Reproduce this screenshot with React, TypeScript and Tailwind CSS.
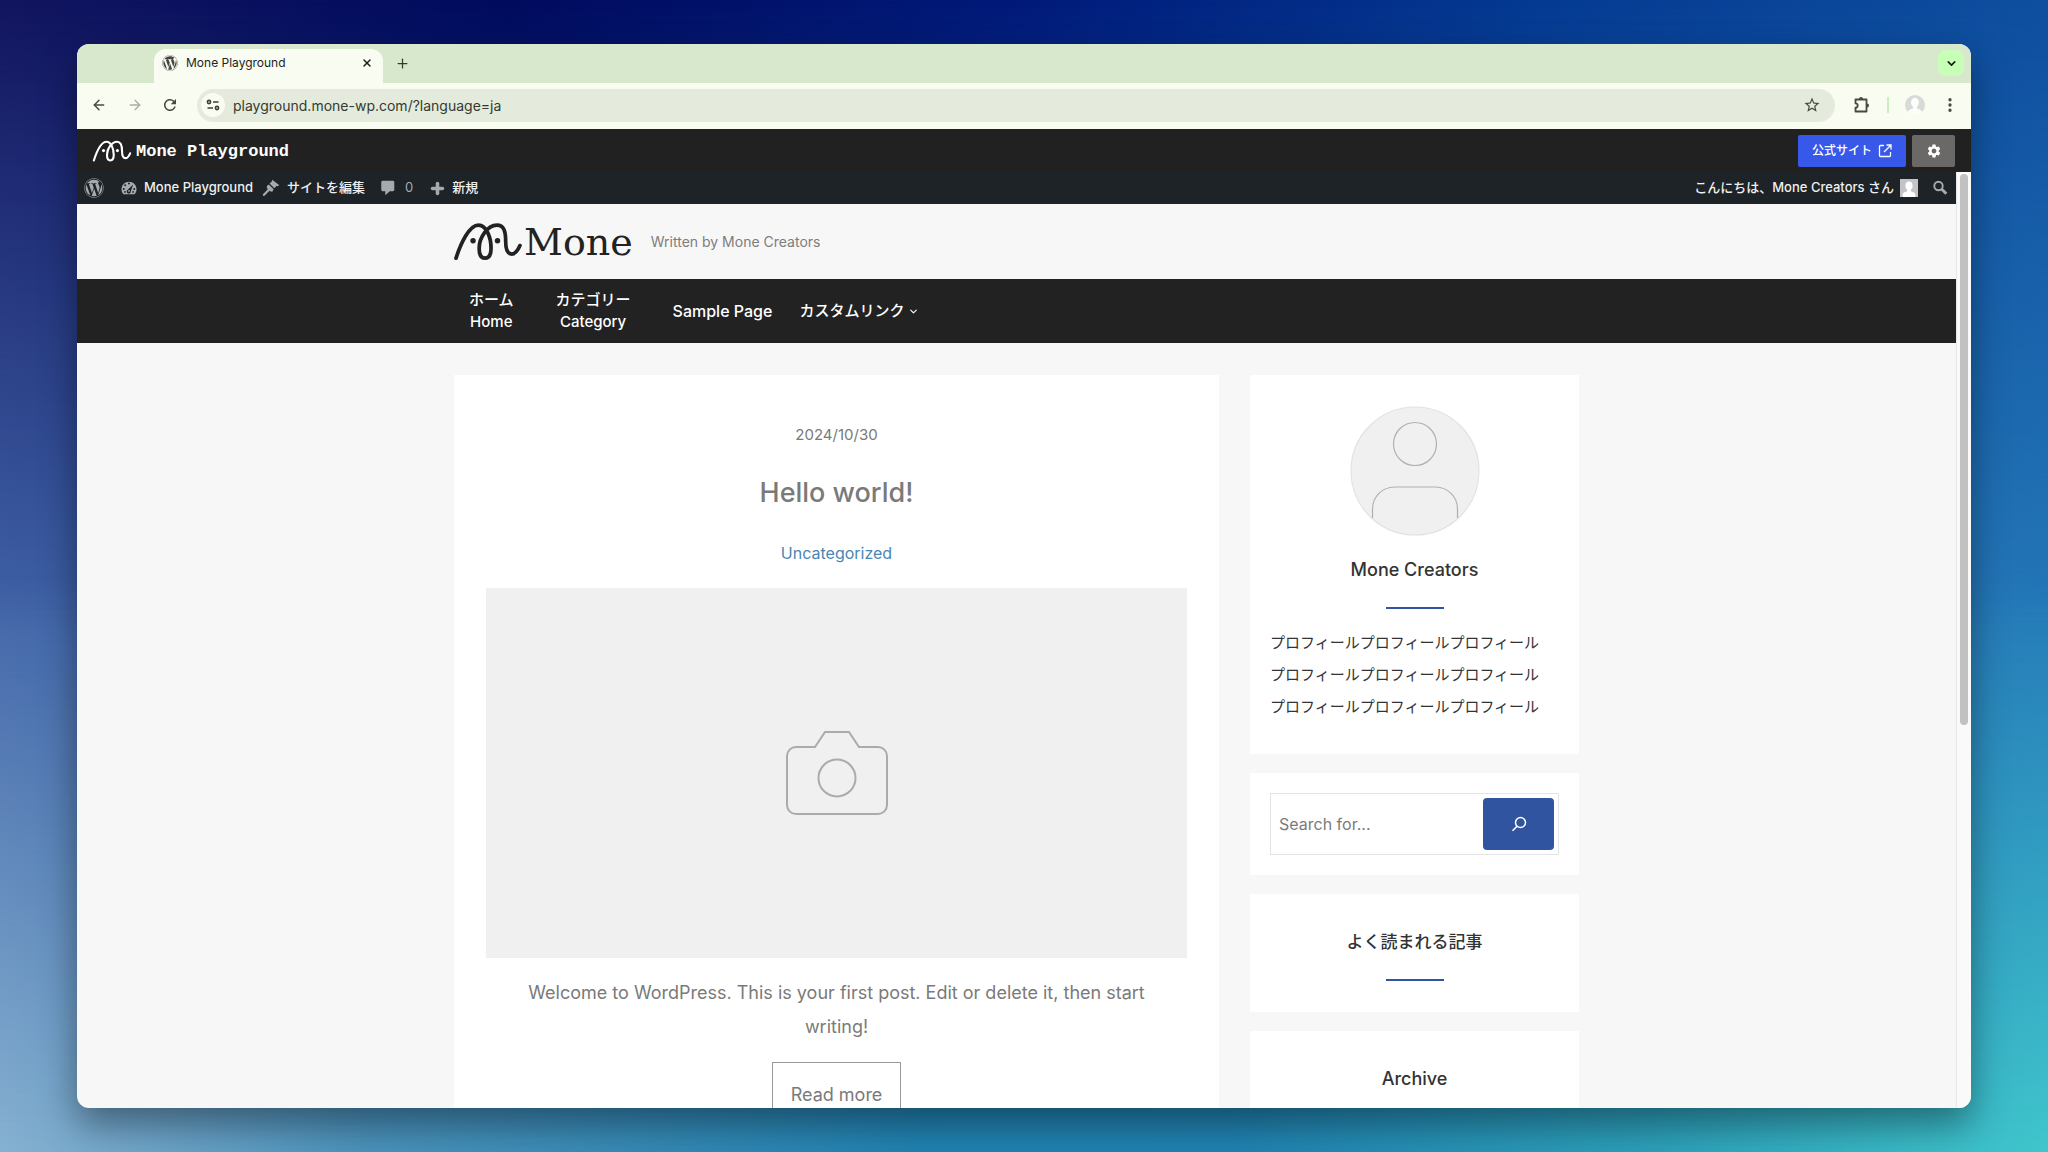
import { ArrowLeft, ArrowRight, ChevronDown, EllipsisVertical, Plus, X } from "lucide-react";
import { FaWordpress } from "react-icons/fa";
import { MdRefresh, MdSettings, MdStarOutline } from "react-icons/md";
import type { ReactNode } from "react";

function MoneMark({ className }: { className: string }) {
  return (
    <svg viewBox="75 68 200 114" className={className} fill="none" stroke="currentColor" strokeWidth="11" strokeLinecap="round" aria-hidden="true">
      <path d="M81 174C95 130 120 77 147 77c24 0 37 38 37 68 0 19-7 29-18 29s-17-10-17-29c0-32 25-68 52-68 21 0 26 18 26 48 0 25 6 37 18 37 11 0 18-11 24-25" />
      <circle cx="131" cy="123" r="8" fill="currentColor" stroke="none" />
      <circle cx="203" cy="123" r="8" fill="currentColor" stroke="none" />
    </svg>
  );
}

function TuneIcon() {
  return (
    <svg viewBox="0 0 14 14" className="size-3.5" fill="none" stroke="#3c4239" strokeWidth="1.6" aria-hidden="true">
      <circle cx="3" cy="4" r="1.6" />
      <path d="M7 4h5.5M1.5 10H7" />
      <circle cx="11" cy="10" r="1.6" />
    </svg>
  );
}

function ExtensionIcon() {
  return (
    <svg viewBox="0 0 18 18" className="size-[18px]" fill="none" stroke="currentColor" strokeWidth="1.8" strokeLinejoin="round" aria-hidden="true">
      <path d="M2.5 3.5h11v12h-11v-3.8a2.2 2.2 0 0 0 0-4.4z" />
      <path fill="currentColor" stroke="none" d="M6 3a2 2 0 0 1 4 0zM14 7.5a2 2 0 0 1 0 4z" />
    </svg>
  );
}

function DashboardIcon() {
  return (
    <svg viewBox="0 0 20 20" className="size-[18px]" aria-hidden="true">
      <path fill="#a7aaad" d="M3.8 17h12.4A8.4 8.4 0 1 0 3.8 17z" />
      <g fill="#1d2327">
        <circle cx="10" cy="5" r="1.1" />
        <circle cx="5.8" cy="7" r="1.1" />
        <circle cx="4.2" cy="11" r="1.1" />
        <circle cx="15.8" cy="11" r="1.1" />
        <circle cx="5.5" cy="14.4" r="1" />
        <circle cx="14.5" cy="14.4" r="1" />
        <path d="M14.6 6.2 12 13.6a2.3 2.3 0 1 1-3.7-1.5z" />
      </g>
      <circle cx="10" cy="13.3" r="1" fill="#a7aaad" />
    </svg>
  );
}

function BrushIcon() {
  return (
    <svg viewBox="0 0 20 20" className="size-5" fill="#a7aaad" aria-hidden="true">
      <path d="m11.2 1.8 7.2 5.4-2 1.1-.9-.3-2.2 2.2-4.7-4.6 2.2-2.1z" />
      <path d="m7.8 6.5 4.8 4.7-1.3 2.5-1.5-.2-1.3-.8-5 5c-.8.8-2.3-.6-1.5-1.5l4.8-5-1-1.4.1-1.8z" />
    </svg>
  );
}

function CommentIcon() {
  return (
    <svg viewBox="0 0 20 20" className="size-[18px]" fill="#a7aaad" aria-hidden="true">
      <path d="M4 2h11.5a1.5 1.5 0 0 1 1.5 1.5v8.5a1.5 1.5 0 0 1-1.5 1.5H12L7 18v-4.5H4A1.5 1.5 0 0 1 2.5 12V3.5A1.5 1.5 0 0 1 4 2z" />
    </svg>
  );
}

function PersonSilhouette({ className }: { className: string }) {
  return (
    <svg viewBox="0 0 18 18" className={className} aria-hidden="true">
      <rect width="18" height="18" fill="#c3c4c7" />
      <ellipse cx="9" cy="6.8" rx="3.6" ry="4.3" fill="#fff" />
      <path fill="#fff" d="M7.2 10h3.6v2.2c2 .6 4 1.3 4.5 2.8v3H2.7v-3c.5-1.5 2.5-2.200 4.5-2.800z" />
    </svg>
  );
}

function TabStrip() {
  return (
    <div className="flex h-[39px] shrink-0 items-end bg-[#d8e8cd] pl-[77px] pr-[7px]">
      <div className="flex h-[34px] w-[229px] items-center rounded-t-xl bg-[#f8fcf1] pb-1.5 pl-2 pr-2.5">
        <FaWordpress className="size-4 shrink-0 text-[#464646]" />
        <span className="ml-2 flex-1 text-[12px] text-[#1f231c]">Mone Playground</span>
        <button aria-label="Close tab" className="text-[#1f231c]">
          <X size={12} strokeWidth={3} />
        </button>
      </div>
      <button aria-label="New tab" className="ml-3 flex h-[34px] items-center pb-1.5 text-[#343a30]">
        <Plus size={15} strokeWidth={2} />
      </button>
      <button aria-label="Search tabs" className="mb-[7px] ml-auto flex size-[26px] items-center justify-center rounded-lg bg-[#c8ffb6] text-[#12210b]">
        <ChevronDown size={13} strokeWidth={3} />
      </button>
    </div>
  );
}

function Toolbar() {
  return (
    <div className="flex h-[46px] shrink-0 items-center bg-[#f8fcf1] pb-0.5 pl-3 pr-3 text-[#454b41]">
      <button aria-label="Back" className="p-0.5"><ArrowLeft size={16} strokeWidth={2.2} /></button>
      <button aria-label="Forward" className="ml-4 p-0.5 text-[#a9ada4]"><ArrowRight size={16} strokeWidth={2} /></button>
      <button aria-label="Reload" className="ml-3.5 p-0.5"><MdRefresh size={18} /></button>
      <div className="ml-4 flex h-[33px] flex-1 items-center rounded-full bg-[#e4ebdc] pl-1 pr-3.5">
        <span className="flex size-6 items-center justify-center rounded-full bg-[#f8fcf1]"><TuneIcon /></span>
        <input
          aria-label="Address"
          defaultValue="playground.mone-wp.com/?language=ja"
          className="ml-2 min-w-0 flex-1 bg-transparent text-[14px] text-[#343a30] outline-none"
        />
        <button aria-label="Bookmark"><MdStarOutline size={18} /></button>
      </div>
      <button aria-label="Extensions" className="ml-[18px]"><ExtensionIcon /></button>
      <span className="ml-4 h-4 w-0.5 bg-[#c8efbc]" />
      <span className="ml-4 overflow-hidden rounded-full"><PersonSilhouette className="size-5 opacity-60" /></span>
      <button aria-label="Menu" className="ml-4"><EllipsisVertical size={18} strokeWidth={2.4} /></button>
    </div>
  );
}

function PlaygroundBar() {
  return (
    <div className="flex h-[43px] shrink-0 items-center bg-[#212121] pl-[15px] pr-4 text-white">
      <MoneMark className="h-[22px] w-10" />
      <span className="ml-1 pt-0.5 font-['Liberation_Mono'] text-[17px] font-bold leading-6">Mone Playground</span>
      <a href="#site" className="ml-auto flex h-8 items-center gap-1.5 rounded-xs bg-[#3858e9] px-3.5 text-[12px] font-medium">
        公式サイト
        <svg viewBox="0 0 14 14" className="size-3.5" fill="none" stroke="currentColor" strokeWidth="1.3" aria-hidden="true">
          <path d="M6 1.5H2.5a1 1 0 0 0-1 1v9a1 1 0 0 0 1 1h9a1 1 0 0 0 1-1V8M8.5 1H13v4.5M13 1 6 8" />
        </svg>
      </a>
      <button aria-label="Settings" className="ml-1.5 flex h-8 w-[43px] items-center justify-center rounded-xs bg-[#6b6868]">
        <MdSettings size={16} />
      </button>
    </div>
  );
}

function AdminBar() {
  return (
    <div className="flex h-8 shrink-0 items-center bg-[#1d2327] pl-[7px] pr-1.5 text-[13px] font-medium text-[#f0f0f1]">
      <FaWordpress className="size-5 text-[#a7aaad]" />
      <a href="#dashboard" className="ml-4 flex items-center gap-1.5"><DashboardIcon />Mone Playground</a>
      <a href="#edit" className="ml-2 flex items-center gap-1.5"><BrushIcon />サイトを編集</a>
      <a href="#comments" className="ml-3.5 flex items-center gap-2 text-[#a7aaad]"><CommentIcon /><span className="font-normal">0</span></a>
      <a href="#new" className="ml-4 flex items-center gap-1.5">
        <Plus size={17} strokeWidth={5} className="text-[#a7aaad]" />
        新規
      </a>
      <a href="#profile" className="ml-auto flex items-center gap-1.5">こんにちは、Mone Creators さん<PersonSilhouette className="size-[18px]" /></a>
      <button aria-label="Search" className="ml-3 p-0.5">
        <svg viewBox="0 0 16 16" className="size-4" fill="none" stroke="#a7aaad" aria-hidden="true">
          <circle cx="6.5" cy="6" r="4.2" strokeWidth="1.9" />
          <path d="m9.8 9.3 4.5 4.5" strokeWidth="3" />
        </svg>
      </button>
    </div>
  );
}

function SiteHeader() {
  return (
    <>
      <header className="mx-auto flex h-[75px] w-full max-w-[1125px] shrink-0 items-center">
        <a href="#home" className="flex items-center gap-0.5 text-[#222]">
          <MoneMark className="h-[39px] w-[68px]" />
          <span className="font-['DejaVu_Serif'] text-[38px] leading-10">Mone</span>
        </a>
        <span className="ml-[18px] text-[14px] text-[#7d7d7d]">Written by Mone Creators</span>
      </header>
      <nav className="h-16 shrink-0 bg-[#222] text-[15px] font-medium leading-[22px] text-white">
        <div className="mx-auto flex h-full max-w-[1125px] items-center gap-3">
          <a href="#home" className="px-[15px] text-center">ホーム<br />Home</a>
          <a href="#category" className="px-[15px] text-center">カテゴリー<br />Category</a>
          <a href="#sample" className="pl-[15px] text-[16px]">Sample Page</a>
          <a href="#custom" className="flex items-center gap-1 pl-[15px]">カスタムリンク<ChevronDown size={11} strokeWidth={2.5} /></a>
        </div>
      </nav>
    </>
  );
}

function Article() {
  return (
    <article className="flex min-w-0 flex-1 flex-col items-center bg-white px-8 pt-12 text-[#7a7a7a]">
      <time className="text-[15px] leading-6">2024/10/30</time>
      <h2 className="mt-[26px] text-[27px] font-medium leading-10">Hello world!</h2>
      <a href="#uncategorized" className="mt-7 text-[16px] leading-6 text-[#4a86b3]">Uncategorized</a>
      <div className="mt-[23px] flex h-[370px] w-full shrink-0 items-center justify-center bg-[#f0f0f0]">
        <svg viewBox="0 0 102 84" className="h-[84px] w-[102px]" fill="none" stroke="#ababab" strokeWidth="2" aria-hidden="true">
          <path d="M10 16h19l10-15h24l10 15h19a9 9 0 0 1 9 9v49a9 9 0 0 1-9 9H10a9 9 0 0 1-9-9V25a9 9 0 0 1 9-9z" />
          <circle cx="51" cy="47" r="18.5" />
        </svg>
      </div>
      <p className="mt-[18px] w-full px-4 text-center text-[18px] leading-[34px]">
        Welcome to WordPress. This is your first post. Edit or delete it, then start writing!
      </p>
      <a href="#more" className="mt-[18px] flex h-16 w-[129px] shrink-0 items-center justify-center border border-[#999] text-[18px]">Read more</a>
    </article>
  );
}

function Card({ children }: { children: ReactNode }) {
  return <section className="shrink-0 bg-white px-5">{children}</section>;
}

function CardTitle({ children }: { children: ReactNode }) {
  return (
    <>
      <h3 className="text-center text-[18px] font-medium leading-7 text-[#333]">{children}</h3>
      <div className="mx-auto mt-[23px] h-0.5 w-[58px] bg-[#30549f]" />
    </>
  );
}

function Sidebar() {
  return (
    <aside className="flex w-[329px] shrink-0 flex-col gap-[19px]">
      <Card>
        <svg viewBox="0 0 130 130" className="mx-auto mb-5 mt-[31px] size-[130px]" fill="none" stroke="#b0b0b0" strokeWidth="1.2" aria-hidden="true">
          <circle cx="65" cy="65" r="64" fill="#f0f0f0" stroke="#e2e2e2" />
          <circle cx="65" cy="38" r="21.5" />
          <path d="M22.5 112V103a22 22 0 0 1 22-22h41a22 22 0 0 1 22 22v9" />
        </svg>
        <CardTitle>Mone Creators</CardTitle>
        <p className="pb-[31px] pt-[18px] text-[15px] leading-8 text-[#333]">
          プロフィールプロフィールプロフィール<br />プロフィールプロフィールプロフィール<br />プロフィールプロフィールプロフィール
        </p>
      </Card>
      <Card>
        <form className="my-5 flex h-[62px] items-center border border-[#e4e4e4] p-1" onSubmit={(e) => e.preventDefault()}>
          <input aria-label="Search" placeholder="Search for..." className="min-w-0 flex-1 px-1 text-[16px] outline-none placeholder:text-[#7a7a7a]" />
          <button aria-label="Submit search" className="flex h-[52px] w-[71px] items-center justify-center rounded bg-[#30549f]">
            <svg viewBox="0 0 16 16" className="size-4" fill="none" stroke="#fff" strokeWidth="1.5" aria-hidden="true">
              <circle cx="9.5" cy="6.5" r="5" />
              <path d="M6 10.2 1.5 14.8" />
            </svg>
          </button>
        </form>
      </Card>
      <Card>
        <div className="pb-[31px] pt-[34px]"><CardTitle><span className="text-[17px]">よく読まれる記事</span></CardTitle></div>
      </Card>
      <Card>
        <div className="pb-[31px] pt-[34px]"><CardTitle>Archive</CardTitle></div>
      </Card>
    </aside>
  );
}

export default function App() {
  return (
    <div className="relative flex h-screen flex-col overflow-hidden bg-[linear-gradient(to_right,#12155f_0%,#000b5e_25%,#001a7a_50%,#053a92_75%,#0f4fa0_100%)] px-[77px] py-11 font-['Inter','Noto_Sans_CJK_JP',sans-serif]">
      <div className="absolute inset-0 bg-[linear-gradient(to_right,#4164a8_0%,#30589f_20%,#2478b8_100%)] [mask-image:linear-gradient(to_bottom,transparent,black_55%)]" />
      <div className="absolute inset-0 bg-[linear-gradient(to_right,#86b1d1_0%,#4a92ba_18%,#2082b0_45%,#2082b0_60%,#2c9fb8_80%,#40c6cc_100%)] [mask-image:linear-gradient(to_bottom,transparent_50%,black)]" />
      <div className="relative flex min-h-0 flex-1 flex-col overflow-hidden rounded-xl bg-[#f7f7f7] shadow-[0_16px_36px_rgba(0,0,0,0.4)]">
        <TabStrip />
        <Toolbar />
        <PlaygroundBar />
        <div className="flex min-h-0 flex-1">
          <div className="flex min-w-0 flex-1 flex-col overflow-hidden">
            <AdminBar />
            <SiteHeader />
            <main className="mx-auto flex min-h-0 w-full max-w-[1125px] flex-1 gap-[31px] pt-8">
              <Article />
              <Sidebar />
            </main>
          </div>
          <div className="w-[15px] border-l border-[#e8e8e8] bg-[#fafafa] px-[3px] pt-0.5">
            <div className="h-[59%] rounded-full bg-[#c1c1c1]" />
          </div>
        </div>
      </div>
    </div>
  );
}
